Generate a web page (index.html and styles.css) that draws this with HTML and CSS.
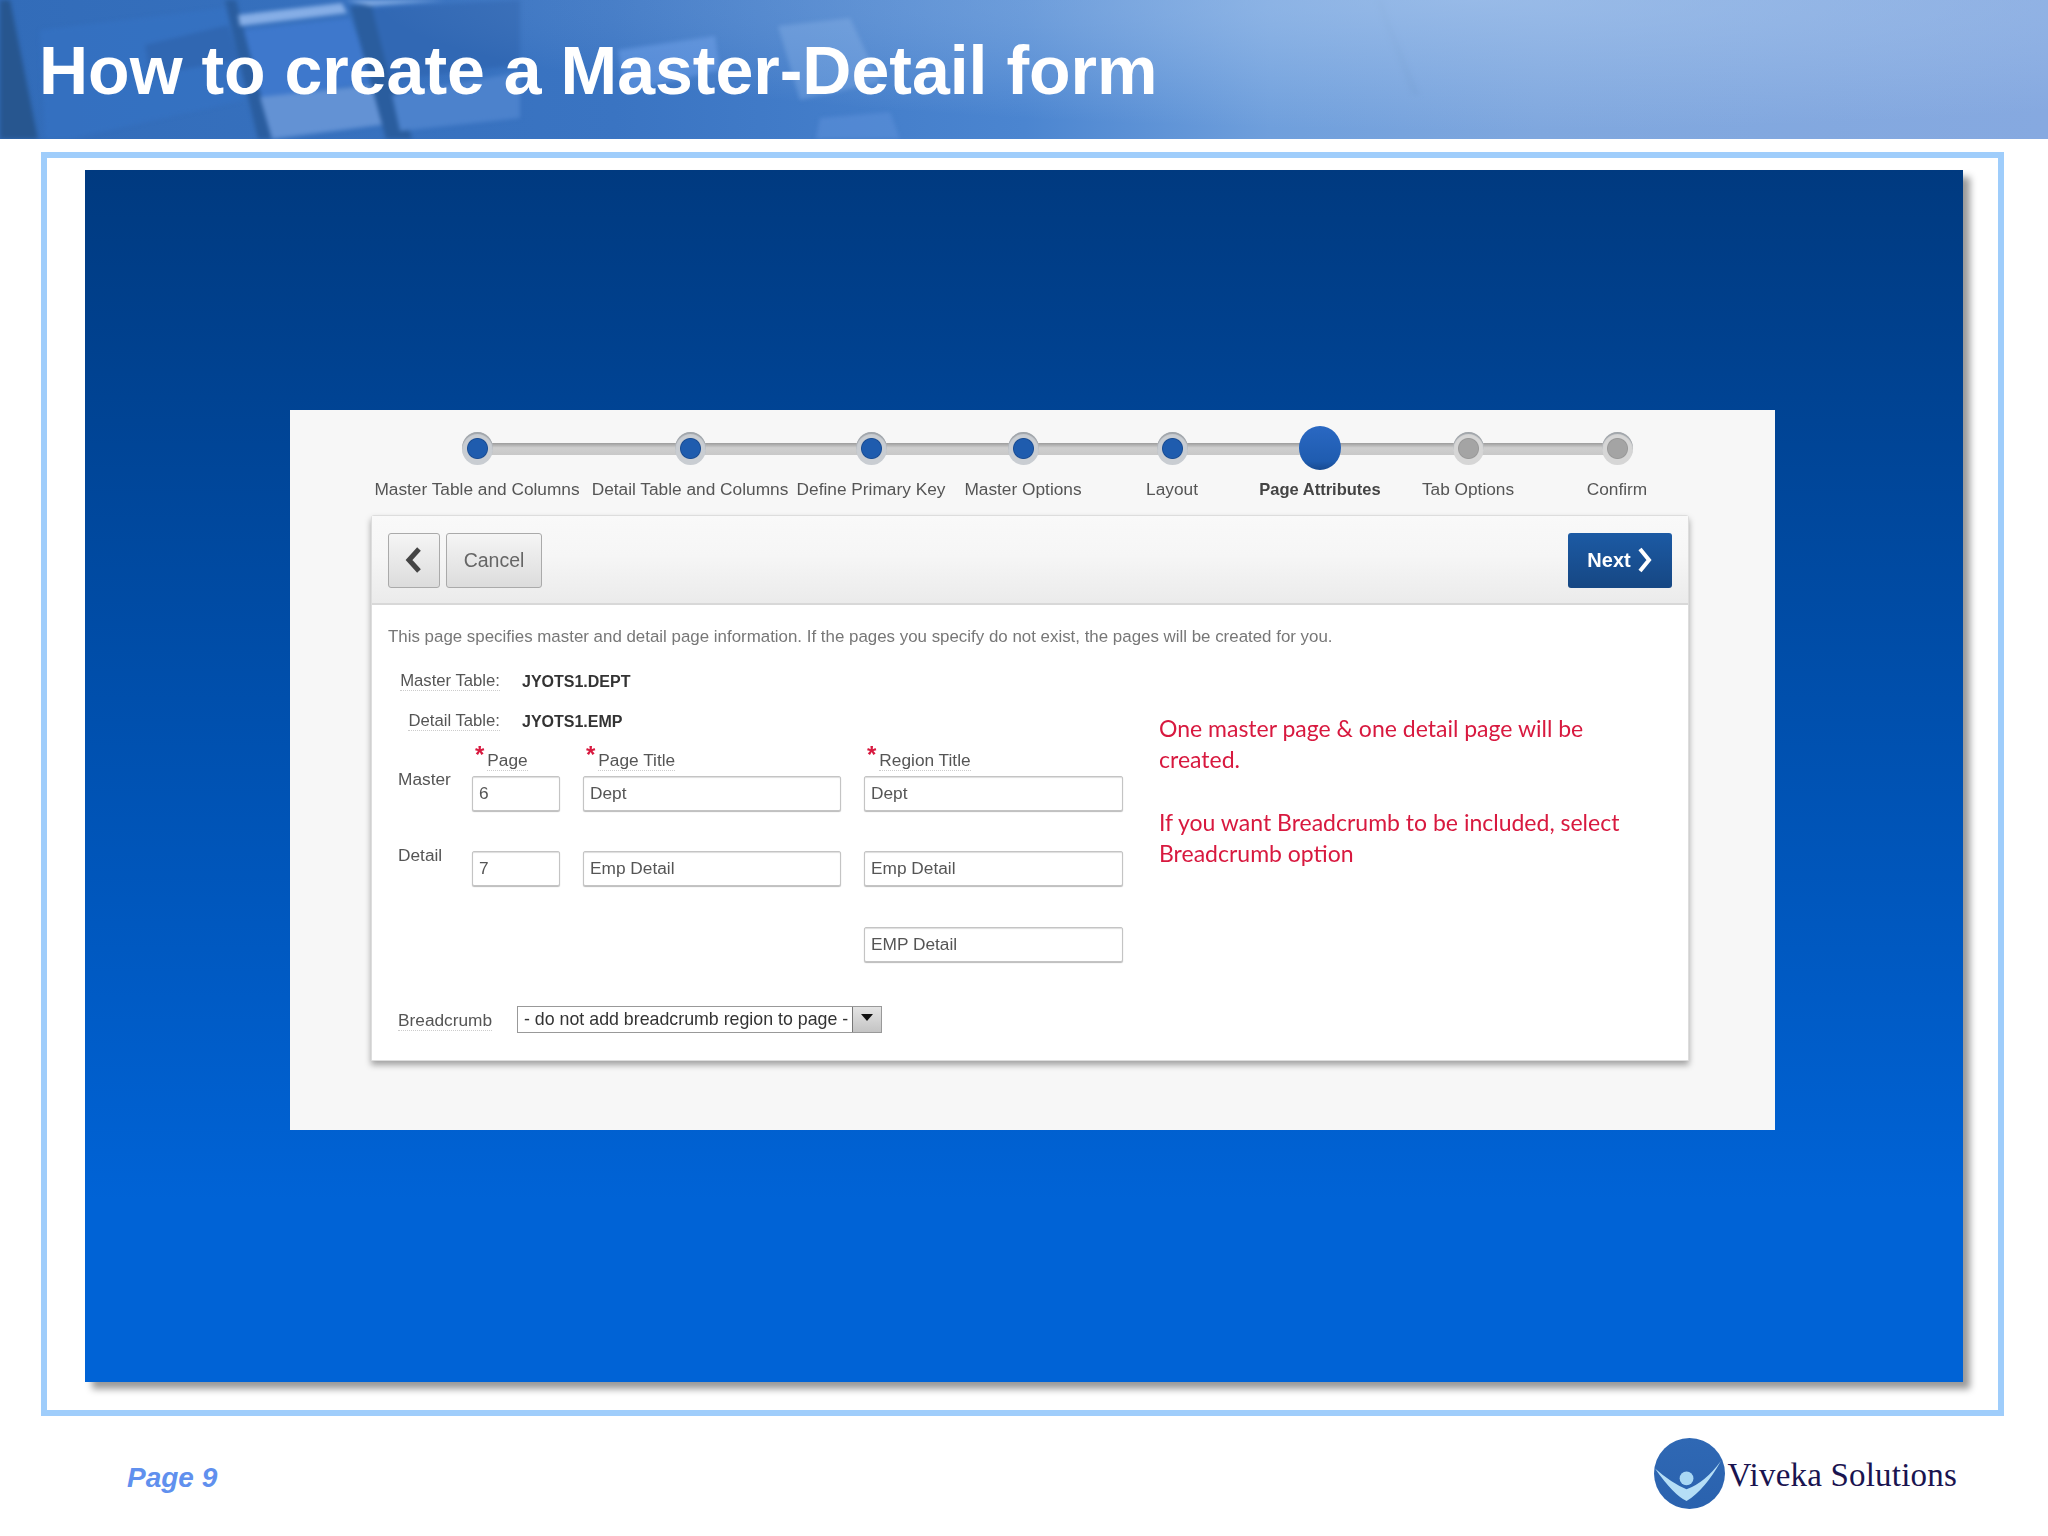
FILE: index.html
```html
<!DOCTYPE html>
<html>
<head>
    <meta charset="UTF-8">
    <title>How to create a Master-Detail form</title>
    <link rel="stylesheet" href="styles.css">
</head>
<body>
    <div class="slide">
        <header class="banner">
            <svg class="banner-art" viewBox="0 0 2048 139" preserveAspectRatio="none">
                <polygon points="0,0 10,0 38,139 0,139" fill="#27568f"/>
                <polygon points="40,30 225,8 245,100 70,139 45,139" fill="#3573c4" opacity=".6"/>
                <polygon points="145,45 228,25 240,60 150,75" fill="#2f64ac" opacity=".7"/>
                <polygon points="225,0 236,0 272,139 258,139" fill="#2a5d9f"/>
                <polygon points="238,15 342,3 347,13 240,26" fill="#86aee6"/>
                <polygon points="244,30 350,18 375,82 262,98" fill="#3e78cc"/>
                <polygon points="260,97 372,85 388,124 272,139" fill="#6392d4"/>
                <polygon points="350,6 372,4 412,139 386,139" fill="#2a5d9e"/>
                <polygon points="345,0 445,0 370,6" fill="#7fa9e2"/>
                <polygon points="392,95 520,72 520,118 400,131" fill="#4c82cc"/>
                <polygon points="372,8 520,0 520,65 390,80" fill="#3168b4"/>
                <polygon points="618,50 715,36 720,70 625,92" fill="#5a90dc" opacity=".8"/>
                <polygon points="778,26 850,18 880,82 800,100" fill="#6c9ddc" opacity=".6"/>
                <polygon points="820,118 890,112 900,139 816,139" fill="#5c90d8" opacity=".6"/>
                <polygon points="1375,0 1382,0 1420,95 1412,95" fill="#6f9bd4" opacity=".5"/>
            </svg>
            <h1 class="banner-title">How to create a Master-Detail form</h1>
        </header>

        <div class="frame">
            <div class="stage">
                <div class="shot">
                    <div class="steps">
                        <div class="steps-track"></div>
                        <div class="step"><span class="dot"></span><span class="step-name">Master Table and Columns</span></div>
                        <div class="step"><span class="dot"></span><span class="step-name">Detail Table and Columns</span></div>
                        <div class="step"><span class="dot"></span><span class="step-name">Define Primary Key</span></div>
                        <div class="step"><span class="dot"></span><span class="step-name">Master Options</span></div>
                        <div class="step"><span class="dot"></span><span class="step-name">Layout</span></div>
                        <div class="step step-current"><span class="dot"></span><span class="step-name">Page Attributes</span></div>
                        <div class="step step-todo"><span class="dot"></span><span class="step-name">Tab Options</span></div>
                        <div class="step step-todo"><span class="dot"></span><span class="step-name">Confirm</span></div>
                    </div>

                    <div class="wizard">
                        <div class="toolbar">
                            <div class="toolbar-left">
                                <div class="btn btn-back">
                                    <svg width="18" height="26" viewBox="0 0 18 26"><polyline points="14,2 4,13 14,24" fill="none" stroke="#444" stroke-width="5"/></svg>
                                </div>
                                <div class="btn btn-cancel">Cancel</div>
                            </div>
                            <div class="btn btn-next">
                                Next
                                <svg width="18" height="26" viewBox="0 0 18 26"><polyline points="5,2 14,13 5,24" fill="none" stroke="#fff" stroke-width="4"/></svg>
                            </div>
                        </div>

                        <div class="wizard-body">
                            <p class="intro">This page specifies master and detail page information. If the pages you specify do not exist, the pages will be created for you.</p>
                            <div class="columns">
                                <div class="form">
                                    <div class="table-row"><div class="table-label"><span class="hint">Master Table:</span></div><div class="table-value">JYOTS1.DEPT</div></div>
                                    <div class="table-row"><div class="table-label"><span class="hint">Detail Table:</span></div><div class="table-value">JYOTS1.EMP</div></div>

                                    <div class="field-row field-head">
                                        <div></div>
                                        <div class="head"><span class="star">*</span><span class="hint">Page</span></div>
                                        <div class="head"><span class="star">*</span><span class="hint">Page Title</span></div>
                                        <div class="head"><span class="star">*</span><span class="hint">Region Title</span></div>
                                    </div>
                                    <div class="field-row">
                                        <div class="row-label">Master</div>
                                        <div class="field">6</div>
                                        <div class="field">Dept</div>
                                        <div class="field">Dept</div>
                                    </div>
                                    <div class="field-row row-gap">
                                        <div class="row-label">Detail</div>
                                        <div class="field">7</div>
                                        <div class="field">Emp Detail</div>
                                        <div class="field">Emp Detail</div>
                                    </div>
                                    <div class="field-row row-gap-last">
                                        <div class="field field-last">EMP Detail</div>
                                    </div>

                                    <div class="crumb-row">
                                        <div class="crumb-label"><span class="hint">Breadcrumb</span></div>
                                        <div class="select">
                                            <span class="select-text">- do not add breadcrumb region to page -</span>
                                            <span class="select-arrow"></span>
                                        </div>
                                    </div>
                                </div>
                                <div class="note">
                                    <p>One master page &amp; one detail page will be created.</p>
                                    <p>If you want Breadcrumb to be included, select Breadcrumb option</p>
                                </div>
                            </div>
                        </div>
                    </div>
                </div>
            </div>
        </div>

        <footer class="footer">
            <div class="page-no">Page 9</div>
            <div class="logo">
                <svg width="71" height="71" viewBox="0 0 72 72">
                    <defs>
                        <linearGradient id="logoFill" x1="0" y1="0" x2="0" y2="1">
                            <stop offset="0" stop-color="#2f68b4"/>
                            <stop offset="1" stop-color="#2a62ae"/>
                        </linearGradient>
                    </defs>
                    <circle cx="36" cy="36" r="36" fill="url(#logoFill)"/>
                    <path d="M1 31 Q18 46 33 52 Q52 45 68 23 Q52 52 33 64 Q20 58 1 31 Z" fill="#b5def6"/>
                    <circle cx="33" cy="41" r="7" fill="#a9d8f4"/>
                </svg>
                <span class="logo-name">Viveka Solutions</span>
            </div>
        </footer>
    </div>
</body>
</html>
```
FILE: styles.css
```css
* {
    box-sizing: border-box;
}
body {
    margin: 0;
    background: white;
    font-family: "Liberation Sans", Arial, sans-serif;
}
.slide {
    width: 2048px;
    height: 1536px;
    display: flex;
    flex-direction: column;
    overflow: hidden;
}

/* banner */
.banner {
    position: relative;
    height: 139px;
    flex: none;
    overflow: hidden;
    padding-left: 39px;
    background: linear-gradient(90deg, #326cb9 0%, #3a74c2 30%, #4b85d0 50%, #6f9fdc 62%, #7fa7de 75%, #86a9e0 100%);
}
.banner::after {
    content: "";
    position: absolute;
    inset: 0;
    background: radial-gradient(ellipse 1100px 130px at 72% 0, rgba(170, 200, 238, .6) 0%, rgba(170, 200, 238, 0) 100%);
}
.banner-art {
    position: absolute;
    left: 0;
    top: 0;
    width: 2048px;
    height: 139px;
    filter: blur(2px);
}
.banner-title {
    position: relative;
    z-index: 1;
    margin: 0;
    color: white;
    font-size: 68px;
    font-weight: bold;
    line-height: 141px;
}

/* frame + blue stage */
.frame {
    flex: none;
    height: 1264px;
    margin: 13px 44px 0 41px;
    border: 6px solid #9fcdfb;
    padding: 12px 35px 28px 38px;
}
.stage {
    height: 100%;
    padding: 240px 188px 0 205px;
    background: linear-gradient(180deg, #003a80 0%, #0063d6 85%, #0063d6 100%);
    box-shadow: 7px 7px 7px rgba(0, 0, 0, .4);
}
.shot {
    height: 720px;
    padding: 16px 86px 0 81px;
    background: #f7f7f7;
    filter: blur(.5px);
}

/* wizard steps */
.steps {
    position: relative;
    display: grid;
    grid-template-columns: 222px 204px 158px 146px 152px 144px 152px 146px;
    margin: 0 -1px 16px -5px;
}
.steps-track {
    position: absolute;
    left: 111px;
    right: 73px;
    top: 17px;
    height: 12px;
    background: linear-gradient(180deg, #9c9c9c 0%, #cfcfcf 40%, #c8c8c8 100%);
}
.step {
    position: relative;
    display: flex;
    flex-direction: column;
    align-items: center;
    gap: 9px;
    font-size: 17.3px;
    line-height: 20px;
    color: #555;
    white-space: nowrap;
}
.dot {
    width: 31px;
    height: 33px;
    margin: 6px 0 5px;
    border-radius: 50%;
    background: radial-gradient(circle at 50% 50%, #1f5cae 0, #1f5cae 9px, #1a4d94 10px, #c9cdd2 11px, #c9cdd2 100%);
    box-shadow: inset 0 2px 1px #a0a5aa;
}
.step-current .dot {
    width: 42px;
    height: 44px;
    margin: 0;
    background: linear-gradient(180deg, #2a68c2 0%, #1f5cb0 80%, #174a90 100%);
    box-shadow: none;
}
.step-current {
    font-weight: bold;
    color: #444;
    font-size: 16.5px;
}
.step-todo .dot {
    background: radial-gradient(circle at 50% 50%, #a4a4a4 0, #a4a4a4 9px, #999 10px, #d6d6d6 11px, #d6d6d6 100%);
}

/* wizard box */
.wizard {
    height: 546px;
    background: white;
    border: 1px solid #ddd;
    border-radius: 3px 3px 0 0;
    box-shadow: 0 4px 6px rgba(0, 0, 0, .35);
}
.toolbar {
    height: 89px;
    display: flex;
    justify-content: space-between;
    align-items: center;
    padding: 1px 16px 0;
    background: linear-gradient(180deg, #f9f9f9 0%, #f6f6f6 45%, #ebebeb 100%);
    border-bottom: 2px solid #d8d8d8;
}
.toolbar-left {
    display: flex;
    gap: 6px;
}
.btn {
    height: 55px;
    display: flex;
    align-items: center;
    justify-content: center;
    border-radius: 3px;
    font-size: 19.5px;
}
.btn-back,
.btn-cancel {
    border: 1px solid #aaa;
    background: linear-gradient(180deg, #f5f5f5 0%, #dcdcdc 100%);
    color: #666;
}
.btn-back {
    width: 52px;
}
.btn-cancel {
    width: 96px;
}
.btn-next {
    width: 104px;
    gap: 4px;
    background: linear-gradient(180deg, #1c5aa4 0%, #164783 100%);
    color: white;
    font-weight: bold;
    font-size: 20px;
}

.wizard-body {
    padding: 20px 17px 0 16px;
}
.intro {
    margin: 0 0 12px;
    font-size: 16.9px;
    line-height: 24px;
    color: #777;
    white-space: nowrap;
}
.columns {
    display: flex;
}
.form {
    width: 725px;
    margin-left: 10px;
    font-size: 17.3px;
    color: #555;
}
.table-row {
    display: grid;
    grid-template-columns: 102px auto;
    column-gap: 22px;
    height: 40px;
    line-height: 42px;
}
.table-label {
    text-align: right;
    line-height: 40px;
    font-size: 16.7px;
    white-space: nowrap;
}
.table-value {
    font-size: 16px;
    font-weight: bold;
    color: #333;
}
.hint {
    border-bottom: 1px dotted #ccc;
}
.field-row {
    display: grid;
    grid-template-columns: 51px 88px 258px 259px;
    column-gap: 23px;
    height: 35px;
}
.row-gap {
    margin-top: 40px;
}
.row-gap-last {
    margin-top: 41px;
}
.head {
    display: flex;
    align-items: flex-start;
    line-height: 20px;
    padding-top: 9px;
}
.star {
    margin: -7px 3px 0 3px;
    color: #d8193f;
    font-size: 24px;
    font-weight: bold;
    line-height: 24px;
}
.row-label {
    margin-top: -7px;
    line-height: 20px;
    white-space: nowrap;
}
.field-row + .row-gap .row-label {
    margin-top: -6px;
}
.field {
    padding-left: 6px;
    line-height: 33px;
    background: white;
    border: 1px solid #c4c4c4;
    border-radius: 2px;
    box-shadow: inset 0 1px 1px #ddd, 0 1px 1px #bbb;
}
.field-last {
    grid-column: 4;
}
.crumb-row {
    display: flex;
    align-items: center;
    height: 27px;
    margin-top: 44px;
}
.crumb-label {
    width: 119px;
    padding-top: 1px;
}
.select {
    width: 365px;
    height: 27px;
    display: flex;
    justify-content: space-between;
    align-items: center;
    padding-left: 6px;
    border: 1px solid #999;
    font-size: 17.8px;
    color: #333;
}
.select-text {
    white-space: nowrap;
}
.select-arrow {
    width: 29px;
    height: 25px;
    display: flex;
    align-items: center;
    justify-content: center;
    background: linear-gradient(180deg, #e4e4e4 0%, #c4c4c4 100%);
    border-left: 1px solid #777;
    flex: none;
}
.select-arrow::after {
    content: "";
    margin-top: -5px;
    border-left: 6px solid transparent;
    border-right: 6px solid transparent;
    border-top: 7px solid #111;
}
.note {
    width: 470px;
    margin: 52px 0 0 36px;
    font-family: Lato, "Open Sans", sans-serif;
    font-size: 23px;
    line-height: 31.4px;
    color: #d8193f;
}
.note p {
    margin: 0 0 31px;
}

/* footer */
.footer {
    flex: 1;
    display: flex;
    justify-content: space-between;
    align-items: flex-start;
    padding: 22px 91px 0 127px;
}
.page-no {
    margin-top: 24px;
    font-size: 28px;
    line-height: 32px;
    font-weight: bold;
    font-style: italic;
    color: #6090ee;
}
.logo {
    display: flex;
    align-items: center;
    gap: 3px;
}
.logo-name {
    padding-top: 4px;
    font-family: "Liberation Serif", "Times New Roman", serif;
    font-size: 33px;
    letter-spacing: .2px;
    color: #1a1450;
    white-space: nowrap;
}
```
